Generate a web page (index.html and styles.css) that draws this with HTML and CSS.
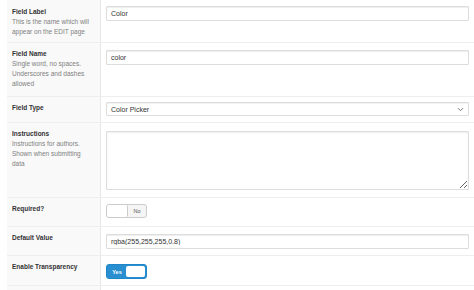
FILE: index.html
```html
<!DOCTYPE html>
<html lang="en">
<head>
  <meta charset="UTF-8">
  <title>Field Settings</title>
  <link rel="stylesheet" href="styles.css">
</head>
<body>
  <div class="fields">
    <div class="row">
      <div class="label">
        <div class="name">Field Label</div>
        <div class="desc">This is the name which will appear on the EDIT page</div>
      </div>
      <div class="value">
        <input class="text" type="text" value="Color">
      </div>
    </div>
    <div class="row">
      <div class="label">
        <div class="name">Field Name</div>
        <div class="desc">Single word, no spaces. Underscores and dashes allowed</div>
      </div>
      <div class="value">
        <input class="text" type="text" value="color">
      </div>
    </div>
    <div class="row">
      <div class="label">
        <div class="name">Field Type</div>
      </div>
      <div class="value">
        <div class="select">
          <span>Color Picker</span>
          <svg class="chevron" width="7" height="5" viewBox="0 0 7 5"><path d="M1 1.2 L3.5 3.7 L6 1.2" fill="none" stroke="#777" stroke-width="1"/></svg>
        </div>
      </div>
    </div>
    <div class="row">
      <div class="label">
        <div class="name">Instructions</div>
        <div class="desc">Instructions for authors. Shown when submitting data</div>
      </div>
      <div class="value">
        <textarea class="area"></textarea>
      </div>
    </div>
    <div class="row">
      <div class="label">
        <div class="name">Required?</div>
      </div>
      <div class="value">
        <span class="switch">
          <span class="knob"></span>
          <span class="state">No</span>
        </span>
      </div>
    </div>
    <div class="row">
      <div class="label">
        <div class="name">Default Value</div>
      </div>
      <div class="value">
        <input class="text" type="text" value="rgba(255,255,255,0.8)">
      </div>
    </div>
    <div class="row">
      <div class="label">
        <div class="name">Enable Transparency</div>
      </div>
      <div class="value">
        <span class="switch on">
          <span class="state">Yes</span>
          <span class="knob"></span>
        </span>
      </div>
    </div>
    <div class="row">
      <div class="label filler"></div>
      <div class="value"></div>
    </div>
  </div>
</body>
</html>
```

FILE: styles.css
```css
/* Base */
body {
  margin: 0;
  background-color: #fff;
  font-family: 'Liberation Sans', Arial, sans-serif;
  color: #333;
  overflow: hidden;
}

/* Settings table */
.fields {
  margin: -1px 0 0 7px;
}

.row {
  display: flex;
  border-top: 1px solid #eee;
}

.row:first-child {
  border-top: none;
}

.label {
  width: 83px;
  flex-shrink: 0;
  padding: 6px 5px 7px 5px;
  background-color: #f9f9f9;
  border-right: 1px solid #e8e8e8;
}

.row:first-child .label {
  padding: 8px 5px 5px 5px;
}

.label .name {
  font-size: 6.5px;
  font-weight: 700;
  line-height: 10px;
  color: #333;
}

.label .desc {
  font-size: 6.5px;
  line-height: 10px;
  color: #808080;
}

.label.filler {
  height: 20px;
}

.value {
  flex: 1;
  padding: 7px 5px 6px 5px;
}

/* Inputs */
.text {
  display: block;
  box-sizing: border-box;
  width: 363px;
  height: 15px;
  margin: 0;
  padding: 0 4px;
  border: 1px solid #ddd;
  border-radius: 1px;
  box-shadow: inset 0 1px 1px rgba(0, 0, 0, 0.07);
  font-family: 'Liberation Sans', Arial, sans-serif;
  font-size: 7px;
  color: #333;
  outline: none;
}

.select {
  display: flex;
  align-items: center;
  justify-content: space-between;
  box-sizing: border-box;
  width: 363px;
  height: 14px;
  margin-top: -2px;
  padding: 0 4px;
  border: 1px solid #ddd;
  border-radius: 1px;
  box-shadow: inset 0 1px 1px rgba(0, 0, 0, 0.06);
  font-size: 7px;
  color: #333;
}

.area {
  display: block;
  box-sizing: border-box;
  width: 363px;
  height: 59px;
  margin: 1px 0 1px 0;
  border: 1px solid #ddd;
  border-radius: 1px;
  box-shadow: inset 0 1px 2px rgba(0, 0, 0, 0.07);
  resize: vertical;
  outline: none;
}

/* Toggle switch */
.switch {
  display: flex;
  box-sizing: border-box;
  width: 41px;
  height: 14px;
  margin: -1px 0 2px 0;
  border: 1px solid #ccc;
  border-radius: 3px;
  background-color: #f5f5f5;
  overflow: hidden;
}

.switch .knob {
  width: 20px;
  background-color: #fff;
  border-right: 1px solid #ccc;
  border-radius: 2px;
}

.switch .state {
  flex: 1;
  display: flex;
  align-items: center;
  justify-content: center;
  font-size: 5.5px;
  color: #555;
}

.switch.on {
  height: 15px;
  margin: 1px 0 0 0;
  border-color: #1f87c9;
  background-color: #2a8fd0;
  padding: 1px;
}

.switch.on .state {
  color: #fff;
  font-weight: 700;
}

.switch.on .knob {
  width: 19px;
  border: none;
  border-radius: 2px;
}
```
